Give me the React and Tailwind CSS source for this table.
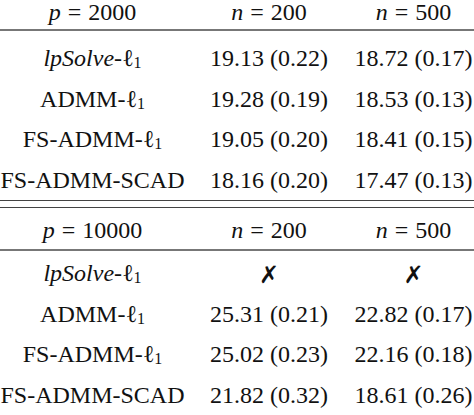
import React from 'react';

const block1 = [
  ['lp', '19.13 (0.22)', '18.72 (0.17)'],
  ['admm', '19.28 (0.19)', '18.53 (0.13)'],
  ['fs', '19.05 (0.20)', '18.41 (0.15)'],
  ['scad', '18.16 (0.20)', '17.47 (0.13)'],
];

const block2 = [
  ['lp', 'x', 'x'],
  ['admm', '25.31 (0.21)', '22.82 (0.17)'],
  ['fs', '25.02 (0.23)', '22.16 (0.18)'],
  ['scad', '21.82 (0.32)', '18.61 (0.26)'],
];

function L1() {
  return (
    <span>
      ℓ<sub className="text-[16px] relative top-[2px] align-baseline">1</sub>
    </span>
  );
}

function Method({ id }) {
  if (id === 'lp') return <span><i>lpSolve</i>-<L1 /></span>;
  if (id === 'admm') return <span>ADMM-<L1 /></span>;
  if (id === 'fs') return <span>FS-ADMM-<L1 /></span>;
  return <span>FS-ADMM-SCAD</span>;
}

function Val({ v }) {
  if (v === 'x') return <span className="font-['DejaVu_Sans',sans-serif] text-[24px] relative top-[2px]">✗</span>;
  return <span>{v}</span>;
}

function Eq({ sym, val }) {
  return (
    <span>
      <i>{sym}</i>
      <span className="mx-[7px]">=</span>
      {val}
    </span>
  );
}

function Row({ cls, a, b, c }) {
  return (
    <div className={`grid grid-cols-[198px_142px_134px] items-center ${cls}`}>
      <div className="pr-[13px] flex justify-center whitespace-nowrap">{a}</div>
      <div className="px-[13px] flex justify-center whitespace-nowrap">{b}</div>
      <div className="pl-[13px] flex justify-center whitespace-nowrap">{c}</div>
    </div>
  );
}

export default function App() {
  return (
    <div className="w-[474px] h-[415px] overflow-hidden bg-white text-[#111] text-[24px] leading-none font-['Liberation_Serif',serif]">
      <Row cls="h-[29px] pb-[7px]" a={<Eq sym="p" val="2000" />} b={<Eq sym="n" val="200" />} c={<Eq sym="n" val="500" />} />
      <div className="h-[2px] bg-[#777]" />
      <div className="pt-[7px]">
        {block1.map(r => (
          <Row key={r[0]} cls="h-[40.5px]" a={<Method id={r[0]} />} b={<Val v={r[1]} />} c={<Val v={r[2]} />} />
        ))}
      </div>
      <div className="h-[8px] border-t border-b border-[#444]" />
      <Row cls="h-[41px] pt-[3px]" a={<Eq sym="p" val="10000" />} b={<Eq sym="n" val="200" />} c={<Eq sym="n" val="500" />} />
      <div className="h-[2px] bg-[#777]" />
      <div className="pt-[2px]">
        {block2.map(r => (
          <Row key={r[0]} cls="h-[40.5px]" a={<Method id={r[0]} />} b={<Val v={r[1]} />} c={<Val v={r[2]} />} />
        ))}
      </div>
    </div>
  );
}
